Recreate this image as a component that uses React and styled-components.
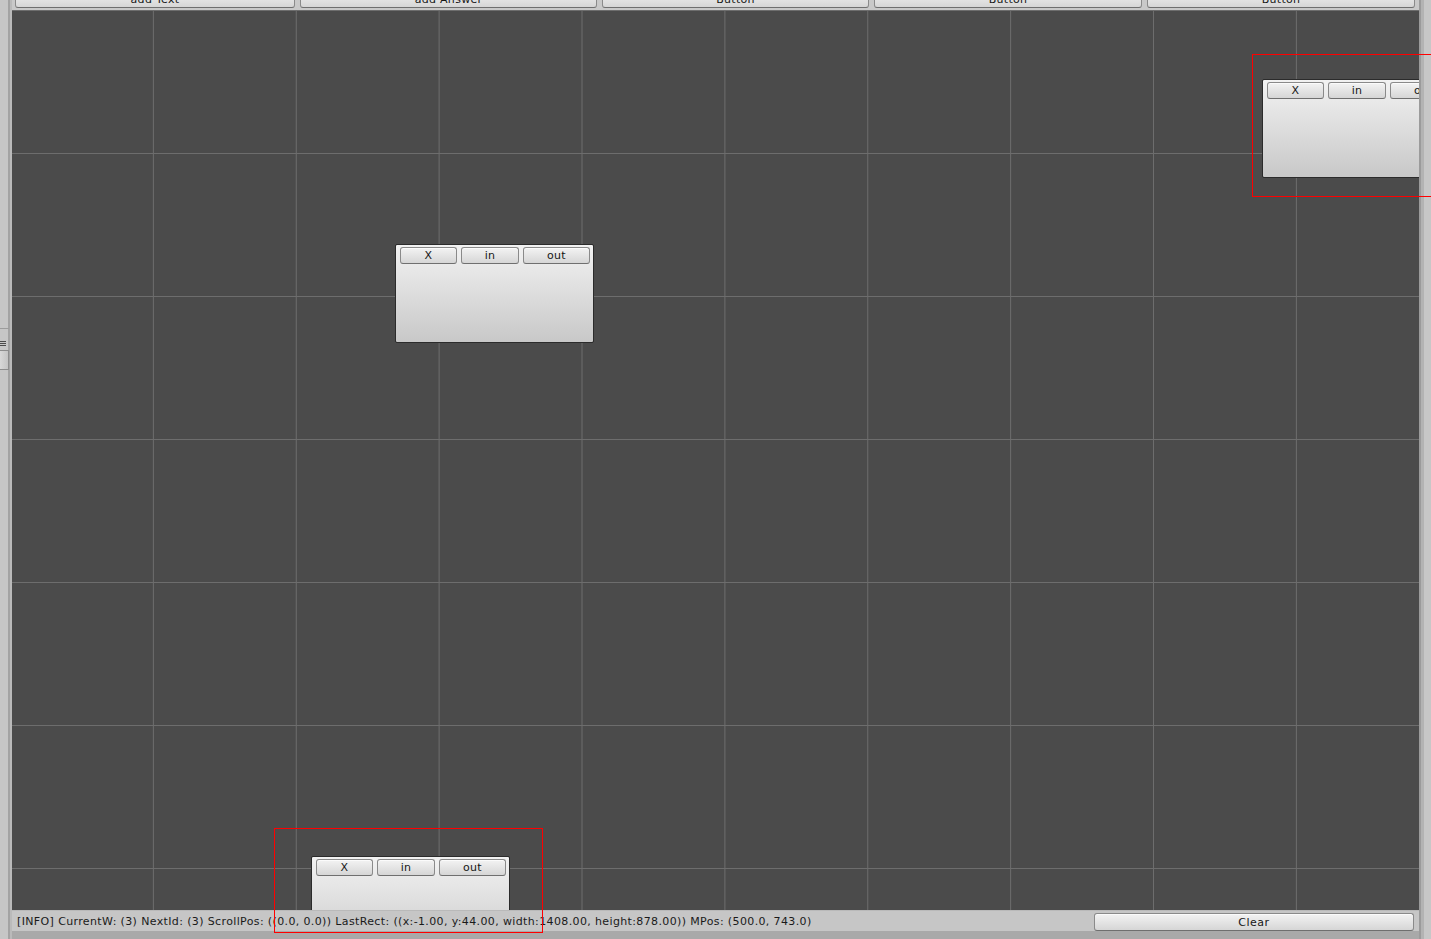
import React from 'react'
import styled, { createGlobalStyle } from 'styled-components'

const GlobalStyle = createGlobalStyle`
    html, body {
        margin: 0;
        padding: 0;
        background: #c2c2c2;
        overflow: hidden;
    }
    * {
        box-sizing: border-box;
    }
`;

const FONT = `"DejaVu Sans", "Liberation Sans", sans-serif`;

const Window = styled.div`
    position: relative;
    width: 1431px;
    height: 939px;
    display: flex;
    font-family: ${FONT};
    color: #161616;
    background: #c2c2c2;
    overflow: hidden;
`;

const LeftStrip = styled.div`
    width: 12px;
    flex-shrink: 0;
    display: flex;
    flex-direction: column;
    background: linear-gradient(to right, #c6c6c6 0 8px, #a3a3a3 8px 10px, #bababa 10px 12px);
`;

const Splitter = styled.div`
    margin-top: 328px;
    width: 9px;
    height: 42px;
    border-top: 1px solid #9c9c9c;
    display: flex;
    flex-direction: column;
    padding-top: 12px;
    gap: 3px;
`;

const GripLines = styled.div`
    width: 6px;
    height: 6px;
    background: repeating-linear-gradient(to bottom, #4a4a4a 0 1px, transparent 1px 2px);
`;

const GripBox = styled.div`
    width: 9px;
    height: 20px;
    border: 1px solid #8d8d8d;
    border-left: none;
    background: linear-gradient(to right, #d8d8d8, #c4c4c4);
`;

const RightStrip = styled.div`
    width: 12px;
    flex-shrink: 0;
    background: linear-gradient(to right, #9b9b9b 0 2px, #b3b3b3 2px 5px, #c7c7c7 5px 12px);
`;

const Column = styled.div`
    flex: 1;
    display: flex;
    flex-direction: column;
    min-width: 0;
`;

const Toolbar = styled.div`
    height: 10px;
    flex-shrink: 0;
    display: flex;
    align-items: flex-end;
    gap: 5px;
    padding-left: 3px;
    background: #c9c9c9;
    overflow: hidden;
`;

const Button = styled.button`
    flex-shrink: 0;
    width: ${p => p.$w}px;
    height: 17px;
    padding: 0;
    font-family: ${FONT};
    font-size: 11px;
    line-height: 1;
    color: #161616;
    border: 1px solid #8a8a8a;
    border-bottom-color: #6f6f6f;
    border-radius: 3px;
    background: linear-gradient(to bottom, #f3f3f3, #d6d6d6);
    box-shadow: inset 0 1px 0 #fbfbfb;
    display: flex;
    align-items: center;
    justify-content: center;
    letter-spacing: 0.3px;
    cursor: default;
`;

const ToolButton = styled(Button)`
    height: 18px;
    margin-bottom: 2px;
`;

const Canvas = styled.div`
    position: relative;
    flex: 1;
    overflow: hidden;
    background-color: #4b4b4b;
    background-image:
        linear-gradient(to right, transparent 142px, #6d6d6d 142px 143px),
        linear-gradient(to bottom, transparent 142px, #6d6d6d 142px 143px);
    background-size: 142.88px 143px;
    background-position: -1px 1px;
`;

const Node = styled.div`
    position: absolute;
    left: ${p => p.$x}px;
    top: ${p => p.$y}px;
    width: 199px;
    height: 99px;
    border: 1px solid #2b2b2b;
    border-radius: 2px;
    background: linear-gradient(to bottom, #f2f2f2, #c8c8c8);
    display: flex;
    align-items: flex-start;
    gap: 4px;
    padding: 2px 0 0 4px;
`;

const StatusBar = styled.div`
    height: 21px;
    flex-shrink: 0;
    display: flex;
    align-items: center;
    justify-content: space-between;
    padding: 0 5px 0 5px;
    background: #c6c6c6;
    border-top: 1px solid #b9b9b9;
`;

const StatusText = styled.span`
    font-size: 11px;
    white-space: nowrap;
    color: #1a1a1a;
    letter-spacing: 0.37px;
`;

const ClearButton = styled(Button)`
    margin-top: 2px;
    height: 18px;
    letter-spacing: 0.5px;
`;

const BottomStrip = styled.div`
    height: 8px;
    flex-shrink: 0;
    background: #a9a9a9;
`;

// selection frames are drawn over everything, status bar included
const Frame = styled.div`
    position: absolute;
    z-index: 2;
    left: ${p => p.$x}px;
    top: ${p => p.$y}px;
    width: ${p => p.$w}px;
    height: ${p => p.$h}px;
    border: 1px solid #ff0000;
    pointer-events: none;
`;

const tools = [
    { label: 'add Text', w: 280 },
    { label: 'add Answer', w: 297 },
    { label: 'Button', w: 267 },
    { label: 'Button', w: 268 },
    { label: 'Button', w: 268 },
];

const nodes = [
    { id: 1, x: 383, y: 234 },
    { id: 2, x: 1250, y: 69 },
    { id: 3, x: 299, y: 846 },
];

const frames = [
    { x: 1252, y: 54, w: 200, h: 143 },
    { x: 274, y: 828, w: 269, h: 105 },
];

const status = '[INFO] CurrentW: (3) NextId: (3) ScrollPos: ((0.0, 0.0)) LastRect: ((x:-1.00, y:44.00, width:1408.00, height:878.00)) MPos: (500.0, 743.0)';

const App = () => {
    return (
        <Window>
            <GlobalStyle />
            <LeftStrip>
                <Splitter>
                    <GripLines />
                    <GripBox />
                </Splitter>
            </LeftStrip>
            <Column>
                <Toolbar>
                    {tools.map((t, i) => (
                        <ToolButton key={i} $w={t.w}>{t.label}</ToolButton>
                    ))}
                </Toolbar>
                <Canvas>
                    {nodes.map(n => (
                        <Node key={n.id} $x={n.x} $y={n.y}>
                            <Button $w={57}>X</Button>
                            <Button $w={58}>in</Button>
                            <Button $w={67}>out</Button>
                        </Node>
                    ))}
                </Canvas>
                <StatusBar>
                    <StatusText>{status}</StatusText>
                    <ClearButton $w={320}>Clear</ClearButton>
                </StatusBar>
                <BottomStrip />
            </Column>
            <RightStrip />
            {frames.map((f, i) => (
                <Frame key={i} $x={f.x} $y={f.y} $w={f.w} $h={f.h} />
            ))}
        </Window>
    )
}

export default App;
